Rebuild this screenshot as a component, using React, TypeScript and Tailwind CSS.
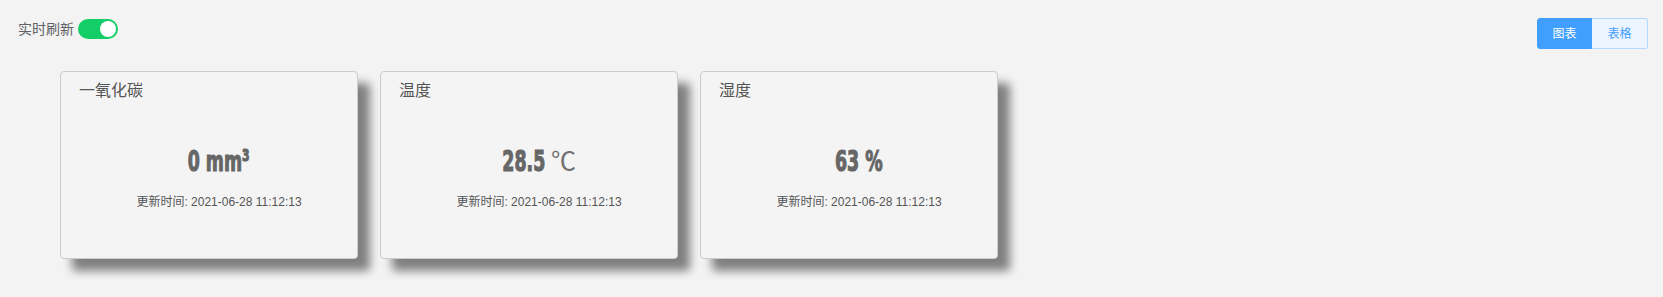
import React from "react";

type Card = { title: string; value: string; valueW: number; unit?: string };

const cards: Card[] = [
  { title: "一氧化碳", value: "0 mm³", valueW: 64 },
  { title: "温度", value: "28.5", valueW: 43, unit: "℃" },
  { title: "湿度", value: "63 %", valueW: 48 },
];

const numFont = { fontFamily: '"DejaVu Sans", sans-serif' };

export default function App() {
  return (
    <div
      className="w-[1663px] h-[297px] bg-[#f3f3f3] text-[#606266] overflow-hidden"
      style={{ fontFamily: '"Liberation Sans", "Noto Sans CJK SC", sans-serif' }}
    >
      <div className="flex justify-between items-start pl-[18px] pr-[15px] pt-[18px]">
        <div className="flex items-center h-[20px] mt-[1px]">
          <span className="text-[14px] text-[#606266] mr-[4px] leading-[20px]">实时刷新</span>
          <div className="relative w-[40px] h-[20px] rounded-full bg-[#13ce66]">
            <div className="absolute right-[2px] top-[2px] w-[16px] h-[16px] rounded-full bg-white" />
          </div>
        </div>
        <div className="flex h-[31px]">
          <button className="w-[55px] h-full bg-[#409eff] border border-[#409eff] rounded-l-[3px] text-white text-[12px]">
            图表
          </button>
          <button className="w-[56px] h-full bg-[#ecf5ff] border border-[#b3d8ff] border-l-0 rounded-r-[3px] text-[#409eff] text-[12px]">
            表格
          </button>
        </div>
      </div>
      <div className="flex gap-[22px] pl-[60px] pt-[22px]">
        {cards.map((c) => (
          <div
            key={c.title}
            className="w-[298px] h-[188px] bg-[#f4f4f4] border border-[#cccccc] rounded-[4px] shadow-[12px_12px_10px_#808080] flex flex-col"
          >
            <div className="pl-[18px] pt-[8px] text-[16px] text-[#555555] leading-[22px]">{c.title}</div>
            <div className="flex flex-col items-center pl-[20px] mt-[44px]">
              <div className="flex items-center h-[30px] text-[#666666]">
                <div className="flex justify-center" style={{ width: c.valueW }}>
                  <span
                    className="inline-block whitespace-nowrap text-[29px] font-bold leading-[30px] scale-x-[0.6] [-webkit-text-stroke:1.2px_#666666]"
                    style={numFont}
                  >
                    {c.value}
                  </span>
                </div>
                {c.unit && (
                  <span className="ml-[6px] text-[25px] leading-[30px] text-[#707070]" style={{ fontFamily: '"Liberation Sans", "Noto Sans CJK SC", sans-serif' }}>
                    {c.unit}
                  </span>
                )}
              </div>
              <div className="mt-[18px] text-[12px] leading-[16px] text-[#555555]">
                更新时间: 2021-06-28 11:12:13
              </div>
            </div>
          </div>
        ))}
      </div>
    </div>
  );
}
